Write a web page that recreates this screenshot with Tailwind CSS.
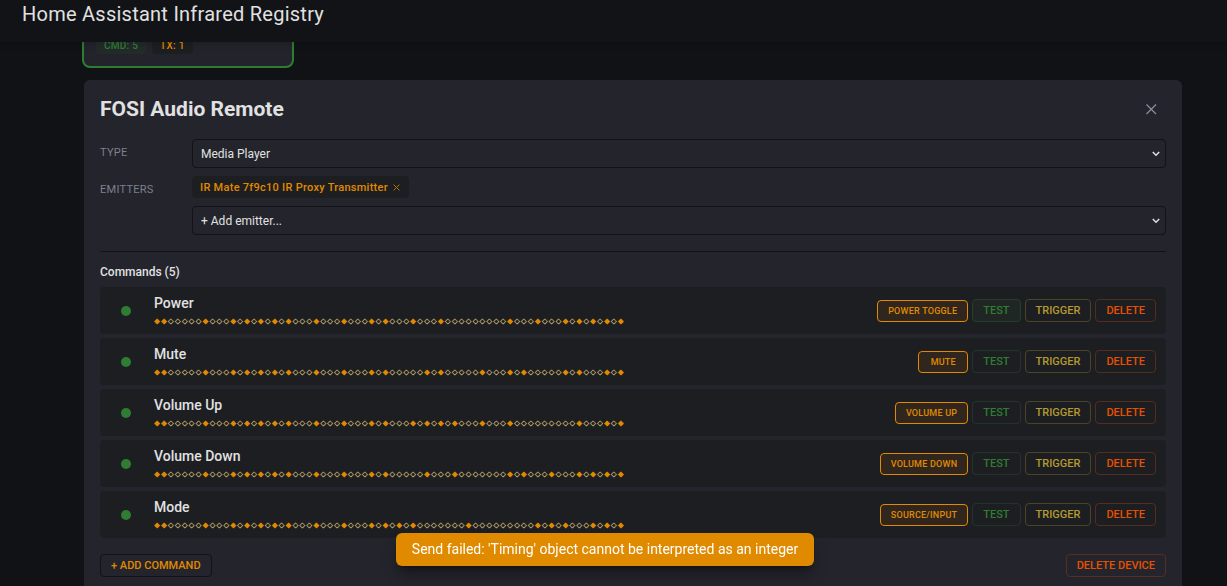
<!DOCTYPE html>
<html lang="en">
<head>
    <meta charset="UTF-8">
    <meta name="viewport" content="width=device-width, initial-scale=1.0">
    <title>Home Assistant Infrared Registry</title>
    <script src="https://cdn.jsdelivr.net/npm/@tailwindcss/browser@4"></script>
</head>
<body class="h-screen overflow-hidden bg-[#111215] font-[Roboto,sans-serif] text-[#e1e1e1]">

<!-- App header -->
<header class="relative z-10 h-[42px] bg-[#111316] px-[22px] shadow-md">
    <h1 class="text-[20px] leading-[28px] tracking-[0.0125em]">Home Assistant Infrared Registry</h1>
</header>

<main class="pl-[82px] pr-[45px]">
    <!-- Device cards, scrolled under the header -->
    <div class="flex h-[26px] items-end overflow-hidden">
        <div class="flex w-[212px] shrink-0 gap-1.5 rounded-lg border-2 border-[#2e7d32] bg-[#23242b] px-3 pt-10 pb-3 text-[10px] leading-[12px] font-medium tracking-wide">
            <span class="rounded bg-[#232b2a] px-2 py-0.5 text-[#2e7d32]">CMD: 5</span>
            <span class="rounded bg-[#1d1e21] px-2 py-0.5 text-[#e08a00]">TX: 1</span>
        </div>
    </div>

    <!-- Device detail -->
    <section class="mt-3 ml-0.5 rounded-md bg-[#24242c] p-4">
        <div class="flex h-[26px] items-center justify-between">
            <h2 class="text-[21px] leading-[26px] font-bold">FOSI Audio Remote</h2>
            <button class="flex size-[30px] items-center justify-center text-[#8a909c]" aria-label="Close">
                <svg class="size-3" viewBox="0 0 12 12" fill="none" stroke="currentColor" stroke-width="1.2">
                    <path d="M1.5 1.5l9.5 9.5M11 1.5L1.5 11"/>
                </svg>
            </button>
        </div>

        <div class="mt-[17px] flex">
            <label for="type" class="w-[92px] shrink-0 pt-[7px] text-[11px] leading-[14px] tracking-wide text-[#7c818b]">TYPE</label>
            <div class="relative flex-1">
                <select id="type" class="block h-[29px] w-full appearance-none rounded border border-[#111316] bg-[#24242c] px-2 text-[12px]">
                    <option>Media Player</option>
                </select>
                <svg class="pointer-events-none absolute top-[12px] right-1.5 h-[6px] w-[8px]" viewBox="0 0 8 6" fill="none" stroke="currentColor" stroke-width="1.5">
                    <path d="M.8 1L4 4.2L7.2 1"/>
                </svg>
            </div>
        </div>

        <div class="mt-2 flex">
            <label for="emitter" class="w-[92px] shrink-0 pt-[7px] text-[11px] leading-[14px] tracking-wide text-[#7c818b]">EMITTERS</label>
            <div class="flex-1">
                <span class="flex h-[22px] w-fit items-center gap-1 rounded bg-[#1d1e21] px-2 pt-0.5 text-[11px] font-medium tracking-wide text-[#e08a00]">
                    IR Mate 7f9c10 IR Proxy Transmitter
                    <button class="flex w-[9px] justify-center pb-0.5 text-[#b5740f]" aria-label="Remove emitter">
                        <svg class="size-[7px]" viewBox="0 0 7 7" fill="none" stroke="currentColor">
                            <path d="M.6 .6l5.8 5.8M6.4 .6L.6 6.4"/>
                        </svg>
                    </button>
                </span>
                <div class="relative mt-2">
                    <select id="emitter" class="block h-[29px] w-full appearance-none rounded border border-[#111316] bg-[#24242c] px-2 text-[12px]">
                        <option>+ Add emitter...</option>
                    </select>
                    <svg class="pointer-events-none absolute top-[12px] right-1.5 h-[6px] w-[8px]" viewBox="0 0 8 6" fill="none" stroke="currentColor" stroke-width="1.5">
                        <path d="M.8 1L4 4.2L7.2 1"/>
                    </svg>
                </div>
            </div>
        </div>

        <!-- Commands -->
        <div class="mt-4 border-t border-[#111316] pt-3">
            <h3 class="text-[12px] leading-[16px] font-medium">Commands (5)</h3>
            <ul class="mt-[7px] space-y-1">
                <li class="flex h-[47px] items-center rounded bg-[#1d1e21] pr-2.5 pl-[21px]">
                    <span class="size-2.5 rounded-full bg-[#2e7d32]"></span>
                    <div class="ml-[23px] flex-1">
                        <p class="text-[14px] leading-[18px] font-medium">Power</p>
                        <p class="pattern mt-[3px] pb-px font-['DejaVu_Sans_Mono',monospace] text-[10px] leading-[11px] tracking-[0.09em] text-[#e08a00]">◆◆◇◇◇◇◇◆◇◇◇◆◇◆◇◆◇◆◇◆◇◇◇◆◇◇◇◆◇◇◇◆◇◆◇◇◇◆◇◇◇◆◇◇◇◇◇◇◇◇◇◆◇◇◇◆◇◇◇◆◇◆◇◆◇◆◇◆</p>
                    </div>
                    <div class="flex items-end gap-1 font-medium">
                        <button class="h-[22px] min-w-[50px] rounded border border-[#e08a00] bg-[#30261e] px-2.5 pt-px text-[9px] tracking-wide text-[#e08a00]">POWER TOGGLE</button>
                        <button class="h-[23px] rounded border border-[#23402a] bg-[#1f2623] px-2.5 pt-0.5 text-[11px] text-[#2e7d32]">TEST</button>
                        <button class="h-[23px] rounded border border-[#4c4427] px-2.5 pt-0.5 text-[11px] text-[#b59a30]">TRIGGER</button>
                        <button class="h-[23px] rounded border border-[#532d1d] px-2.5 pt-0.5 text-[11px] text-[#e65100]">DELETE</button>
                    </div>
                </li>
                <li class="flex h-[47px] items-center rounded bg-[#1d1e21] pr-2.5 pl-[21px]">
                    <span class="size-2.5 rounded-full bg-[#2e7d32]"></span>
                    <div class="ml-[23px] flex-1">
                        <p class="text-[14px] leading-[18px] font-medium">Mute</p>
                        <p class="pattern mt-[3px] pb-px font-['DejaVu_Sans_Mono',monospace] text-[10px] leading-[11px] tracking-[0.09em] text-[#e08a00]">◆◆◇◇◇◇◇◆◇◇◇◆◇◆◇◆◇◆◇◆◇◇◇◆◇◇◇◆◇◇◇◆◇◆◇◇◇◇◇◆◇◆◇◇◇◇◇◆◇◇◇◆◇◆◇◇◇◇◇◆◇◆◇◇◇◆◇◆</p>
                    </div>
                    <div class="flex items-end gap-1 font-medium">
                        <button class="h-[22px] min-w-[50px] rounded border border-[#e08a00] bg-[#30261e] px-2.5 pt-px text-[9px] tracking-wide text-[#e08a00]">MUTE</button>
                        <button class="h-[23px] rounded border border-[#23352a] px-2.5 pt-0.5 text-[11px] text-[#2e7d32]">TEST</button>
                        <button class="h-[23px] rounded border border-[#4c4427] px-2.5 pt-0.5 text-[11px] text-[#b59a30]">TRIGGER</button>
                        <button class="h-[23px] rounded border border-[#532d1d] px-2.5 pt-0.5 text-[11px] text-[#e65100]">DELETE</button>
                    </div>
                </li>
                <li class="flex h-[47px] items-center rounded bg-[#1d1e21] pr-2.5 pl-[21px]">
                    <span class="size-2.5 rounded-full bg-[#2e7d32]"></span>
                    <div class="ml-[23px] flex-1">
                        <p class="text-[14px] leading-[18px] font-medium">Volume Up</p>
                        <p class="pattern mt-[3px] pb-px font-['DejaVu_Sans_Mono',monospace] text-[10px] leading-[11px] tracking-[0.09em] text-[#e08a00]">◆◆◇◇◇◇◇◆◇◇◇◆◇◆◇◆◇◆◇◆◇◇◇◆◇◇◇◆◇◇◇◆◇◆◇◇◇◆◇◆◇◆◇◆◇◇◇◆◇◇◇◆◇◇◇◇◇◇◇◇◇◆◇◇◇◆◇◆</p>
                    </div>
                    <div class="flex items-end gap-1 font-medium">
                        <button class="h-[22px] min-w-[50px] rounded border border-[#e08a00] bg-[#30261e] px-2.5 pt-px text-[9px] tracking-wide text-[#e08a00]">VOLUME UP</button>
                        <button class="h-[23px] rounded border border-[#23352a] px-2.5 pt-0.5 text-[11px] text-[#2e7d32]">TEST</button>
                        <button class="h-[23px] rounded border border-[#4c4427] px-2.5 pt-0.5 text-[11px] text-[#b59a30]">TRIGGER</button>
                        <button class="h-[23px] rounded border border-[#532d1d] px-2.5 pt-0.5 text-[11px] text-[#e65100]">DELETE</button>
                    </div>
                </li>
                <li class="flex h-[47px] items-center rounded bg-[#1d1e21] pr-2.5 pl-[21px]">
                    <span class="size-2.5 rounded-full bg-[#2e7d32]"></span>
                    <div class="ml-[23px] flex-1">
                        <p class="text-[14px] leading-[18px] font-medium">Volume Down</p>
                        <p class="pattern mt-[3px] pb-px font-['DejaVu_Sans_Mono',monospace] text-[10px] leading-[11px] tracking-[0.09em] text-[#e08a00]">◆◆◇◇◇◇◇◆◇◇◇◆◇◆◇◆◇◆◇◆◇◇◇◆◇◇◇◆◇◇◇◆◇◆◇◇◇◇◇◆◇◇◇◆◇◇◇◇◇◇◇◆◇◆◇◇◇◆◇◇◇◆◇◆◇◆◇◆</p>
                    </div>
                    <div class="flex items-end gap-1 font-medium">
                        <button class="h-[22px] min-w-[50px] rounded border border-[#e08a00] bg-[#30261e] px-2.5 pt-px text-[9px] tracking-wide text-[#e08a00]">VOLUME DOWN</button>
                        <button class="h-[23px] rounded border border-[#23352a] px-2.5 pt-0.5 text-[11px] text-[#2e7d32]">TEST</button>
                        <button class="h-[23px] rounded border border-[#4c4427] px-2.5 pt-0.5 text-[11px] text-[#b59a30]">TRIGGER</button>
                        <button class="h-[23px] rounded border border-[#532d1d] px-2.5 pt-0.5 text-[11px] text-[#e65100]">DELETE</button>
                    </div>
                </li>
                <li class="flex h-[47px] items-center rounded bg-[#1d1e21] pr-2.5 pl-[21px]">
                    <span class="size-2.5 rounded-full bg-[#2e7d32]"></span>
                    <div class="ml-[23px] flex-1">
                        <p class="text-[14px] leading-[18px] font-medium">Mode</p>
                        <p class="pattern mt-[3px] pb-px font-['DejaVu_Sans_Mono',monospace] text-[10px] leading-[11px] tracking-[0.09em] text-[#e08a00]">◆◆◇◇◇◇◇◆◇◇◇◆◇◆◇◆◇◆◇◆◇◇◇◆◇◇◇◆◇◇◇◆◇◆◇◆◇◆◇◇◇◇◇◇◇◆◇◇◇◇◇◇◇◇◇◆◇◆◇◆◇◇◇◆◇◆◇◆</p>
                    </div>
                    <div class="flex items-end gap-1 font-medium">
                        <button class="h-[22px] min-w-[50px] rounded border border-[#e08a00] bg-[#30261e] px-2.5 pt-px text-[9px] tracking-wide text-[#e08a00]">SOURCE/INPUT</button>
                        <button class="h-[23px] rounded border border-[#23352a] px-2.5 pt-0.5 text-[11px] text-[#2e7d32]">TEST</button>
                        <button class="h-[23px] rounded border border-[#4c4427] px-2.5 pt-0.5 text-[11px] text-[#b59a30]">TRIGGER</button>
                        <button class="h-[23px] rounded border border-[#532d1d] px-2.5 pt-0.5 text-[11px] text-[#e65100]">DELETE</button>
                    </div>
                </li>
            </ul>
        </div>

        <div class="mt-4 flex justify-between text-[11px] font-medium">
            <button class="h-[23px] rounded border border-[#111316] px-2.5 pt-0.5 text-[#e08a00]">+ ADD COMMAND</button>
            <button class="h-[23px] rounded border border-[#5a2e20] px-2.5 pt-0.5 text-[#e65100]">DELETE DEVICE</button>
        </div>
    </section>
</main>

<!-- Toast -->
<div class="fixed bottom-5 left-0 flex w-full justify-center pr-[17px]">
    <div role="alert" class="rounded-md bg-[#e08a00] px-4 py-2 text-[14px] leading-[17px] text-white shadow-lg shadow-black/40">Send failed: 'Timing' object cannot be interpreted as an integer</div>
</div>

<script>
    document.querySelectorAll('.pattern').forEach(function (el) {
        el.innerHTML = el.textContent.replace(/◇+/g, '<span class="text-[#dcc07c]">$&</span>');
    });
</script>
</body>
</html>
